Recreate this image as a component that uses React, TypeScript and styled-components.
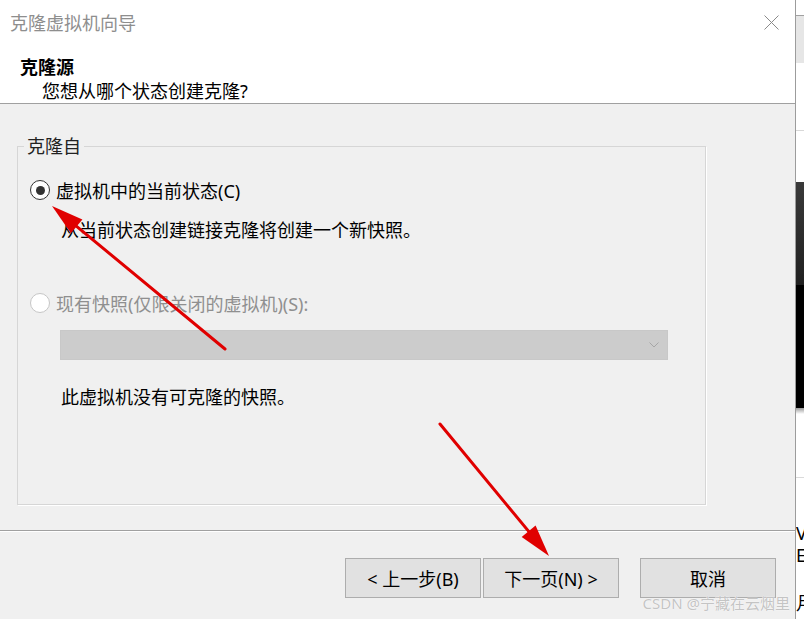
import React from "react";
import styled, { createGlobalStyle } from "styled-components";

const Global = createGlobalStyle`
  html, body { margin: 0; padding: 0; background: #ffffff; }
  body { font-family: "Noto Sans", "Noto Sans CJK SC", sans-serif; }
  #root { width: 804px; height: 619px; overflow: hidden; }
  * { box-sizing: border-box; }
`;

const Page = styled.div`
  position: relative;
  display: flex;
  width: 804px;
  height: 619px;
  overflow: hidden;
`;

const Dialog = styled.div`
  width: 796px;
  flex: none;
  border-right: 1px solid #9c9c9c;
  display: flex;
  flex-direction: column;
  background: #f0f0f0;
`;

const TitleBar = styled.div`
  height: 45px;
  flex: none;
  background: #ffffff;
  display: flex;
  align-items: center;
  justify-content: space-between;
  padding: 0 16px 0 10px;
`;

const Title = styled.span`
  font-size: 18px;
  line-height: 24px;
  color: #8e8e8e;
`;

const CloseButton = styled.div`
  width: 15px;
  height: 15px;
  display: flex;
`;

const Header = styled.div`
  height: 59px;
  flex: none;
  background: #ffffff;
  border-bottom: 1px solid #a0a0a0;
  padding: 11px 0 0 20px;
`;

const HeaderTitle = styled.div`
  font-size: 18px;
  line-height: 23px;
  font-weight: 700;
  color: #000;
`;

const HeaderSub = styled.div`
  font-size: 18px;
  line-height: 24px;
  color: #000;
  padding-left: 22px;
`;

const Body = styled.div`
  flex: 1;
  display: flex;
  flex-direction: column;
  padding: 0 89px 0 17px;
`;

const Group = styled.fieldset`
  flex: 1;
  margin: 30px 0 25px 0;
  padding: 20px 0 0 0;
  border: 1px solid #d6d6d6;
  box-shadow: 1px 1px 0 #ffffff;
  min-width: 0;
`;

const Legend = styled.legend`
  font-size: 18px;
  line-height: 24px;
  color: #222;
  padding: 0 3px;
  margin-left: 6px;
`;

const Stack = styled.div`
  display: flex;
  flex-direction: column;
  align-items: flex-start;
  padding-left: 12px;
`;

const RadioRow = styled.div<{ $top: number; $disabled?: boolean }>`
  display: flex;
  align-items: center;
  gap: 6px;
  height: 24px;
  margin-top: ${(p) => p.$top}px;
  font-size: 18px;
  color: ${(p) => (p.$disabled ? "#8f8f8f" : "#000")};
`;

const RadioCircle = styled.span<{ $checked?: boolean; $disabled?: boolean }>`
  width: 20px;
  height: 20px;
  border-radius: 50%;
  border: 1.5px solid ${(p) => (p.$disabled ? "#c6c6c6" : "#333333")};
  background: #ffffff;
  display: flex;
  align-items: center;
  justify-content: center;
  &::after {
    content: "";
    display: ${(p) => (p.$checked ? "block" : "none")};
    width: 9px;
    height: 9px;
    border-radius: 50%;
    background: #333333;
  }
`;

const Note = styled.div<{ $top: number }>`
  font-size: 18px;
  line-height: 24px;
  color: #000;
  margin: ${(p) => p.$top}px 0 0 31px;
`;

const Combo = styled.div`
  margin: 15px 0 0 30px;
  width: 608px;
  height: 30px;
  background: #cccccc;
  border: 1px solid #c8c8c8;
  display: flex;
  align-items: center;
  justify-content: flex-end;
  padding-right: 8px;
`;

const Footer = styled.div`
  height: 89px;
  flex: none;
  border-top: 1px solid #a0a0a0;
  box-shadow: inset 0 1px 0 #ffffff;
  display: flex;
  justify-content: flex-end;
  align-items: flex-start;
  padding: 27px 19px 0 0;
`;

const Button = styled.button<{ $gap: number }>`
  width: 136px;
  height: 40px;
  margin-left: ${(p) => p.$gap}px;
  background: #e1e1e1;
  border: 1px solid #adadad;
  font-family: "Noto Sans", "Noto Sans CJK SC", sans-serif;
  font-size: 18px;
  color: #000;
  padding: 0;
  display: flex;
  align-items: center;
  justify-content: center;
`;

const Strip = styled.div`
  flex: 1;
  display: flex;
  flex-direction: column;
  overflow: hidden;
  background: #ffffff;
`;

const StripBlock = styled.div<{ $h: number; $bg: string; $line?: string }>`
  height: ${(p) => p.$h}px;
  flex: none;
  background: ${(p) => p.$bg};
  border-bottom: ${(p) => (p.$line ? `1px solid ${p.$line}` : "none")};
`;

const StripText = styled.div`
  padding-top: 44px;
  font-size: 18px;
  line-height: 22px;
  color: #000;
  white-space: nowrap;
`;

const StripChar = styled.div<{ $top?: number }>`
  margin-top: ${(p) => p.$top ?? 0}px;
`;

const Watermark = styled.div`
  position: absolute;
  right: 14px;
  top: 591px;
  font-size: 15px;
  line-height: 24px;
  color: #c4c4c4;
  text-shadow: 0 0 1px #ffffff, 0 0 1px #ffffff;
  white-space: nowrap;
  pointer-events: none;
`;

const Overlay = styled.svg`
  position: absolute;
  left: 0;
  top: 0;
  pointer-events: none;
`;

type Pt = [number, number];

function Arrow({ tail, tip, len = 32, half = 9 }: { tail: Pt; tip: Pt; len?: number; half?: number }) {
  const dx = tip[0] - tail[0];
  const dy = tip[1] - tail[1];
  const d = Math.hypot(dx, dy);
  const ux = dx / d;
  const uy = dy / d;
  const bx = tip[0] - ux * len;
  const by = tip[1] - uy * len;
  const px = -uy;
  const py = ux;
  const pts = `${tip[0]},${tip[1]} ${bx + px * half},${by + py * half} ${bx - px * half},${by - py * half}`;
  return (
    <g>
      <line x1={tail[0]} y1={tail[1]} x2={bx + ux * 4} y2={by + uy * 4} stroke="#e00000" strokeWidth={3} strokeLinecap="round" />
      <polygon points={pts} fill="#e00000" />
    </g>
  );
}

export default function App() {
  return (
    <>
      <Global />
      <Page>
        <Dialog>
          <TitleBar>
            <Title>克隆虚拟机向导</Title>
            <CloseButton>
              <svg width="15" height="15" viewBox="0 0 15 15">
                <path d="M0.5 0.5 L14.5 14.5 M14.5 0.5 L0.5 14.5" stroke="#8a8a8a" strokeWidth="1" fill="none" />
              </svg>
            </CloseButton>
          </TitleBar>
          <Header>
            <HeaderTitle>克隆源</HeaderTitle>
            <HeaderSub>您想从哪个状态创建克隆?</HeaderSub>
          </Header>
          <Body>
            <Group>
              <Legend>克隆自</Legend>
              <Stack>
                <RadioRow $top={0}>
                  <RadioCircle $checked />
                  <span>虚拟机中的当前状态(C)</span>
                </RadioRow>
                <Note $top={16}>从当前状态创建链接克隆将创建一个新快照。</Note>
                <RadioRow $top={49} $disabled>
                  <RadioCircle $disabled />
                  <span>现有快照(仅限关闭的虚拟机)(S):</span>
                </RadioRow>
                <Combo>
                  <svg width="10" height="6" viewBox="0 0 10 6">
                    <path d="M0.5 0.5 L5 5 L9.5 0.5" stroke="#a6a6a6" strokeWidth="1" fill="none" />
                  </svg>
                </Combo>
                <Note $top={25}>此虚拟机没有可克隆的快照。</Note>
              </Stack>
            </Group>
          </Body>
          <Footer>
            <Button $gap={0}>&lt; 上一步(B)</Button>
            <Button $gap={2}>下一页(N) &gt;</Button>
            <Button $gap={21}>取消</Button>
          </Footer>
        </Dialog>
        <Strip>
          <StripBlock $h={16} $bg="#ffffff" $line="#a0a0a0" />
          <StripBlock $h={47} $bg="#e6e6e6" />
          <StripBlock $h={68} $bg="#ffffff" $line="#d8d8d8" />
          <StripBlock $h={51} $bg="#ffffff" />
          <StripBlock $h={103} $bg="linear-gradient(#3a3a3a, #202020)" />
          <StripBlock $h={123} $bg="#000000" />
          <StripBlock $h={70} $bg="linear-gradient(#9a9a9a, #ffffff 6px)" $line="#dadada" />
          <StripText>
            <StripChar>V</StripChar>
            <StripChar>E</StripChar>
            <StripChar $top={26}>月</StripChar>
          </StripText>
        </Strip>
        <Watermark>CSDN @宁藏在云烟里</Watermark>
        <Overlay width="804" height="619" viewBox="0 0 804 619">
          <Arrow tail={[225, 349]} tip={[52, 206]} />
          <Arrow tail={[440, 424]} tip={[549, 556]} />
        </Overlay>
      </Page>
    </>
  );
}
